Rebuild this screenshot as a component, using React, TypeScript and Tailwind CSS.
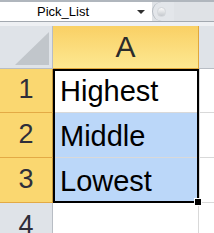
import React from "react";

const rows = [
  { n: "1", text: "Highest", bg: "bg-white", row: "row-start-2" },
  { n: "2", text: "Middle", bg: "bg-[#bbd7f9]", row: "row-start-3" },
  { n: "3", text: "Lowest", bg: "bg-[#bbd7f9]", row: "row-start-4" },
];

export default function App() {
  return (
    <div className="w-[214px] h-[233px] overflow-hidden bg-white font-['Liberation_Sans',Arial,sans-serif]">
      {/* name box / formula bar */}
      <div className="h-[22px] flex border-t-2 border-t-[#b0b6bd] border-b border-b-[#a3a9b0] bg-[#dfe2e6]">
        <div className="w-[152px] bg-white flex items-center">
          <span className="ml-[37px] text-[13px] leading-none text-black">Pick_List</span>
          <span className="ml-auto mr-[7px] w-0 h-0 border-l-[4px] border-r-[4px] border-t-[4px] border-l-transparent border-r-transparent border-t-[#2f2f2f]" />
        </div>
        <div className="flex-1 flex">
          <div className="w-[22px] h-full rounded-l-full border-l border-[#b4bac1] bg-[#e3e6ea] flex items-center pl-[4px]">
            <div className="w-[9px] h-[10px] rounded-full bg-gradient-to-b from-[#fbfbfb] to-[#c4c8cd] border border-[#d3d6da]" />
          </div>
        </div>
      </div>
      <div className="h-[4px] bg-[#eef0f3]" />

      {/* sheet grid */}
      <div className="grid grid-cols-[53px_146px_15px] grid-rows-[43px_44px_45px_45px_30px]">
        {/* corner */}
        <div className="col-start-1 row-start-1 bg-[#dfe3e8] border-r border-b border-[#b8bdc4] flex">
          <svg width="52" height="42" viewBox="0 0 52 42">
            <polygon points="49,6 49,39 15,39" fill="#c1c6cb" />
          </svg>
        </div>
        <div className="col-start-2 row-start-1 bg-gradient-to-b from-[#f9d064] to-[#fde891] border-r border-b border-[#e0a73b] flex items-end justify-center pb-[6px]">
          <span className="text-[30px] leading-none text-[#2b2b2b]">A</span>
        </div>
        <div className="col-start-3 row-start-1 bg-[#dfe3e8] border-b border-[#b8bdc4]" />

        {rows.map((r) => (
          <React.Fragment key={r.n}>
            <div className={`${r.row} col-start-1 bg-[#fad770] border-r border-r-[#c4963a] border-b border-b-[#e3aa45] flex items-end justify-center pb-[9px]`}>
              <span className="text-[27px] leading-none text-[#2e2e3a]">{r.n}</span>
            </div>
            <div className={`${r.row} col-start-2 ${r.bg} border-b border-[#d9d9d9] flex items-end pl-[7px] pb-[4px]`}>
              <span className="text-[29px] leading-[33px] text-black">{r.text}</span>
            </div>
            <div className={`${r.row} col-start-3 bg-white border-b border-[#d9d9d9] border-l border-l-[#d9d9d9]`} />
          </React.Fragment>
        ))}

        {/* selection A1:A3 */}
        <div className="col-start-2 row-start-2 row-span-3 border-2 border-black relative">
          <div className="absolute -right-[4px] -bottom-[4px] w-[6px] h-[6px] bg-black outline outline-1 outline-white" />
        </div>

        <div className="col-start-1 row-start-5 bg-[#dfe3e8] border-r border-[#b8bdc4] flex items-end justify-center">
          <span className="text-[27px] leading-none text-[#2e2e3a] translate-y-[6px]">4</span>
        </div>
        <div className="col-start-2 row-start-5 bg-white border-r border-[#d9d9d9]" />
        <div className="col-start-3 row-start-5 bg-white" />
      </div>
    </div>
  );
}
